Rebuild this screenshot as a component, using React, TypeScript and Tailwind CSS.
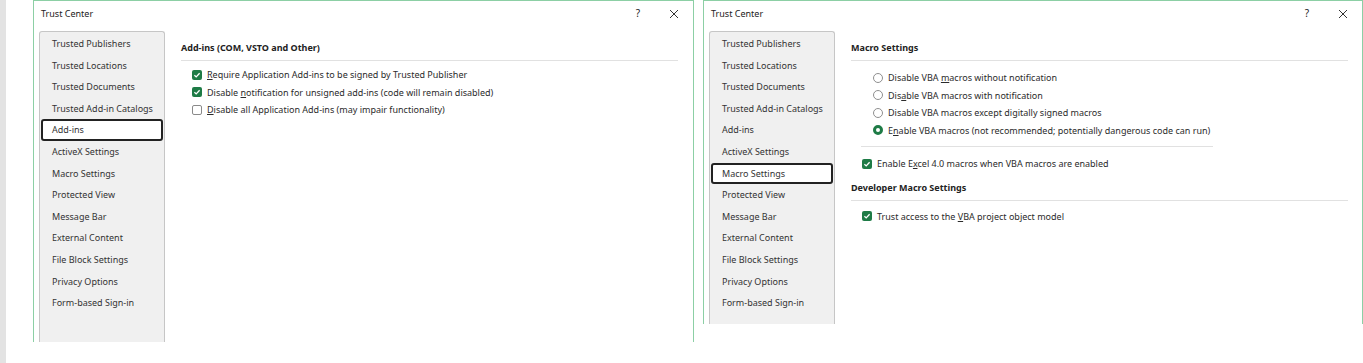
import React from "react";

const navItems = [
  "Trusted Publishers",
  "Trusted Locations",
  "Trusted Documents",
  "Trusted Add-in Catalogs",
  "Add-ins",
  "ActiveX Settings",
  "Macro Settings",
  "Protected View",
  "Message Bar",
  "External Content",
  "File Block Settings",
  "Privacy Options",
  "Form-based Sign-in",
];

const Check = ({ checked }: { checked: boolean }) =>
  checked ? (
    <span className="w-[10px] h-[10px] rounded-[2px] bg-[#1e7b46] flex items-center justify-center shrink-0">
      <svg width="8" height="8" viewBox="0 0 8 8">
        <path d="M1.4 4.2 L3.2 5.9 L6.6 2.2" fill="none" stroke="#fff" strokeWidth="1.3" />
      </svg>
    </span>
  ) : (
    <span className="w-[10px] h-[10px] rounded-[2px] border border-[#8a8a8a] bg-white shrink-0" />
  );

const Radio = ({ on }: { on: boolean }) =>
  on ? (
    <span className="w-[10px] h-[10px] rounded-full border-[3px] border-[#1e7b46] bg-white shrink-0" />
  ) : (
    <span className="w-[10px] h-[10px] rounded-full border border-[#8f8f8f] bg-white shrink-0" />
  );

const TitleBar = () => (
  <div className="h-[25px] flex items-center pl-[7px] pr-[14px] text-[9px] text-[#222]">
    <span>Trust Center</span>
    <span className="ml-auto w-[10px] text-center text-[10px]">?</span>
    <span className="ml-[26px] w-[10px] flex justify-center">
      <svg width="10" height="10" viewBox="0 0 10 10">
        <path d="M1 1 L9 9 M9 1 L1 9" stroke="#333" strokeWidth="1" />
      </svg>
    </span>
  </div>
);

const Nav = ({ active }: { active: string }) => (
  <div className="w-[126px] shrink-0 bg-[#f0f0f0] border border-b-0 border-[#c6c6c6] rounded-t-[3px] pt-[1px] px-px">
    {navItems.map((item) => (
      <div
        key={item}
        className={
          item === active
            ? "h-[21.6px] flex items-center pl-[9px] text-[9px] text-[#333] bg-white border-2 border-[#222] rounded-[3px]"
            : "h-[21.6px] flex items-center pl-[9px] text-[9px] text-[#333] border-2 border-transparent"
        }
      >
        {item}
      </div>
    ))}
  </div>
);

const Header = ({ children }: { children: React.ReactNode }) => (
  <div className="h-[13px] flex items-center font-bold text-[9px] text-[#222]">{children}</div>
);

const Row = ({ box, children }: { box: React.ReactNode; children: React.ReactNode }) => (
  <div className="h-[17.5px] flex items-center gap-[5px] text-[9px] text-[#2b2b2b]">
    {box}
    <span>{children}</span>
  </div>
);

export default function App() {
  return (
    <div className="w-[1363px] h-[363px] bg-white flex items-start overflow-hidden font-['Noto_Sans','Liberation_Sans',sans-serif]">
      <div className="w-[6px] h-[363px] bg-[#e3e3e3] shrink-0" />

      {/* left dialog */}
      <div className="ml-[27px] w-[661px] h-[342px] shrink-0 border border-b-0 border-[#8ccfa5] flex flex-col">
        <TitleBar />
        <div className="flex flex-1 pl-[5px] pt-[5px] min-h-0">
          <Nav active="Add-ins" />
          <div className="ml-[16px] w-[497px] pt-[10px]">
            <Header>Add-ins (COM, VSTO and Other)</Header>
            <div className="mt-[6px] h-px bg-[#e1e1e1]" />
            <div className="pl-[11px] pt-[5px]">
              <Row box={<Check checked />}>
                <u className="underline-offset-1">R</u>equire Application Add-ins to be signed by Trusted Publisher
              </Row>
              <Row box={<Check checked />}>
                Disable <u className="underline-offset-1">n</u>otification for unsigned add-ins (code will remain disabled)
              </Row>
              <Row box={<Check checked={false} />}>
                <u className="underline-offset-1">D</u>isable all Application Add-ins (may impair functionality)
              </Row>
            </div>
          </div>
        </div>
      </div>

      {/* right dialog */}
      <div className="ml-[9px] w-[660px] h-[324px] shrink-0 border border-b-0 border-[#8ccfa5] flex flex-col">
        <TitleBar />
        <div className="flex flex-1 pl-[5px] pt-[5px] min-h-0">
          <Nav active="Macro Settings" />
          <div className="ml-[16px] w-[497px] pt-[10px]">
            <Header>Macro Settings</Header>
            <div className="mt-[6px] h-px bg-[#e1e1e1]" />
            <div className="pl-[22px] pt-[8px]">
              <Row box={<Radio on={false} />}>
                Disable VBA <u className="underline-offset-1">m</u>acros without notification
              </Row>
              <Row box={<Radio on={false} />}>
                Dis<u className="underline-offset-1">a</u>ble VBA macros with notification
              </Row>
              <Row box={<Radio on={false} />}>
                Disable VBA macros except digitally signed macros
              </Row>
              <Row box={<Radio on />}>
                E<u className="underline-offset-1">n</u>able VBA macros (not recommended; potentially dangerous code can run)
              </Row>
            </div>
            <div className="ml-[10px] mr-[135px] mt-[7px] h-px bg-[#e1e1e1]" />
            <div className="pl-[11px] pt-[8px]">
              <Row box={<Check checked />}>
                Enable E<u className="underline-offset-1">x</u>cel 4.0 macros when VBA macros are enabled
              </Row>
            </div>
            <div className="mt-[9px]">
              <Header>Developer Macro Settings</Header>
            </div>
            <div className="mt-[5px] h-px bg-[#e1e1e1]" />
            <div className="pl-[11px] pt-[7px]">
              <Row box={<Check checked />}>
                Trust access to the <u className="underline-offset-1">V</u>BA project object model
              </Row>
            </div>
          </div>
        </div>
      </div>
    </div>
  );
}
